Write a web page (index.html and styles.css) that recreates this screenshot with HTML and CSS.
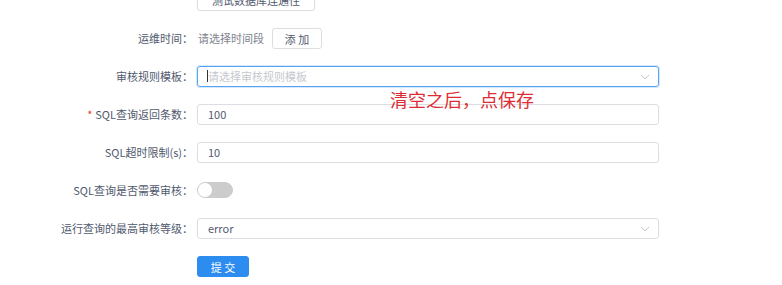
FILE: index.html
```html
<!DOCTYPE html>
<html lang="zh-CN">
<head>
  <meta charset="UTF-8">
  <title>实例配置</title>
  <link rel="stylesheet" href="styles.css">
</head>
<body>
<div class="form-wrap">
  <form class="form">
    <!-- 测试连接 -->
    <div class="form-item">
      <label class="form-label"></label>
      <div class="form-control">
        <button type="button" class="btn">测试数据库连通性</button>
      </div>
    </div>

    <div class="form-item">
      <label class="form-label">运维时间：</label>
      <div class="form-control">
        <span class="hint">请选择时间段</span>
        <button type="button" class="btn btn-add">添 加</button>
      </div>
    </div>

    <div class="form-item">
      <label class="form-label">审核规则模板：</label>
      <div class="form-control">
        <div class="select select-focus">
          <span class="caret"></span>
          <span class="placeholder">请选择审核规则模板</span>
          <svg class="arrow" viewBox="0 0 10 6" width="10" height="6"><path d="M1 1l4 4 4-4" fill="none" stroke="#c5c8ce" stroke-width="1"/></svg>
        </div>
      </div>
    </div>

    <div class="form-item">
      <label class="form-label"><span class="required">*</span>SQL查询返回条数：</label>
      <div class="form-control">
        <div class="input">100</div>
      </div>
    </div>

    <div class="form-item">
      <label class="form-label">SQL超时限制(s)：</label>
      <div class="form-control">
        <div class="input">10</div>
      </div>
    </div>

    <div class="form-item">
      <label class="form-label">SQL查询是否需要审核：</label>
      <div class="form-control">
        <span class="switch"><span class="switch-knob"></span></span>
      </div>
    </div>

    <div class="form-item">
      <label class="form-label">运行查询的最高审核等级：</label>
      <div class="form-control">
        <div class="select">
          <span class="value">error</span>
          <svg class="arrow" viewBox="0 0 10 6" width="10" height="6"><path d="M1 1l4 4 4-4" fill="none" stroke="#c5c8ce" stroke-width="1"/></svg>
        </div>
      </div>
    </div>

    <div class="form-item">
      <label class="form-label"></label>
      <div class="form-control">
        <button type="button" class="btn btn-primary">提 交</button>
      </div>
    </div>
  </form>

  <!-- 截图上的标注 -->
  <div class="note">清空之后，点保存</div>
</div>
</body>
</html>
```

FILE: styles.css
```css
* {
  box-sizing: border-box;
}

body {
  margin: 0;
  background: #fff;
  font-family: "Noto Sans CJK SC", "Noto Sans", sans-serif;
  font-size: 11px;
  color: #515a6e;
  overflow: hidden;
}

/* 上方按钮被截掉一半 */
.form-wrap {
  position: relative;
  margin-top: -11px;
}

.form-item {
  display: flex;
  align-items: center;
  height: 22px;
  margin-bottom: 16px;
}

.form-label {
  width: 197px;
  padding-right: 4px;
  text-align: right;
  color: #515a6e;
  white-space: nowrap;
}

.required {
  color: #ed4014;
  margin-right: 3px;
}

.form-control {
  display: flex;
  align-items: center;
  height: 22px;
}

.btn {
  height: 22px;
  padding: 0 14px;
  border: 1px solid #dcdee2;
  border-radius: 3px;
  background: #fff;
  color: #515a6e;
  font-family: inherit;
  font-size: 11px;
  line-height: 20px;
}

.btn-add {
  width: 50px;
  height: 21px;
  padding: 0;
  margin-left: 8px;
}

.btn-primary {
  width: 52px;
  height: 21px;
  padding: 0;
  background: #2d8cf0;
  border-color: #2d8cf0;
  color: #fff;
}

.hint {
  color: #80848f;
  padding-left: 1px;
}

.input, .select {
  display: flex;
  align-items: center;
  width: 462px;
  height: 21px;
  padding: 0 10px;
  border: 1px solid #dcdee2;
  border-radius: 3px;
  color: #515a6e;
}

.select {
  position: relative;
}

.select-focus {
  border-color: #57a3f3;
  box-shadow: 0 0 0 1px rgba(45, 140, 240, .2);
}

.placeholder {
  color: #c5c8ce;
}

.caret {
  width: 1px;
  height: 12px;
  background: #333;
  margin-left: -1px;
}

.arrow {
  position: absolute;
  right: 8px;
  top: 7px;
}

.switch {
  position: relative;
  display: inline-block;
  width: 36px;
  height: 16px;
  border-radius: 8px;
  background: #ccc;
  border: 1px solid #ccc;
}

.switch-knob {
  position: absolute;
  left: 0;
  top: 0;
  width: 14px;
  height: 14px;
  border-radius: 50%;
  background: #fff;
}

.note {
  position: absolute;
  left: 390px;
  top: 101px;
  font-size: 18px;
  line-height: 18px;
  color: #dc2d34;
  white-space: nowrap;
}
```
